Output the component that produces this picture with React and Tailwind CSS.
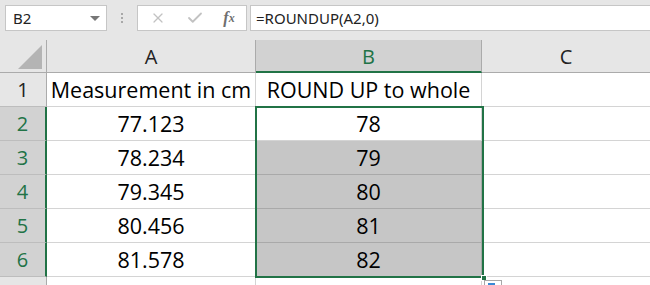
import React from 'react';
import { X, Check } from 'lucide-react';

const rows = [
  { n: 1, a: 'Measurement in cm', b: 'ROUND UP to whole' },
  { n: 2, a: '77.123', b: '78' },
  { n: 3, a: '78.234', b: '79' },
  { n: 4, a: '79.345', b: '80' },
  { n: 5, a: '80.456', b: '81' },
  { n: 6, a: '81.578', b: '82' },
];

const cellFont = { fontFamily: '"Open Sans", "Noto Sans", sans-serif' };

export default function App() {
  return (
    <div className="w-[650px] h-[285px] overflow-hidden bg-white relative" style={cellFont}>
      {/* formula bar */}
      <div className="h-[40px] bg-[#e6e6e6] flex items-start pt-[5px]">
        <div className="ml-[5px] w-[102px] h-[26px] bg-white border border-[#c6c6c6] flex items-center justify-between pl-[7px] pr-[6px]">
          <span className="text-[15px] text-[#222]" style={{ fontFamily: '"Noto Sans", sans-serif' }}>B2</span>
          <span className="w-0 h-0 border-l-[5px] border-r-[5px] border-t-[5px] border-l-transparent border-r-transparent border-t-[#777]" />
        </div>
        <div className="w-[30px] h-[26px] flex flex-col items-center justify-center gap-[2px]">
          <span className="w-[2px] h-[2px] bg-[#a8a8a8]" />
          <span className="w-[2px] h-[2px] bg-[#a8a8a8]" />
          <span className="w-[2px] h-[2px] bg-[#a8a8a8]" />
        </div>
        <div className="w-[110px] h-[26px] bg-white border border-[#c6c6c6] flex items-center">
          <div className="w-[40px] flex justify-center"><X className="w-[16px] h-[16px] text-[#c2c2c2]" strokeWidth={1.8} /></div>
          <div className="w-[34px] flex justify-center"><Check className="w-[18px] h-[18px] text-[#c2c2c2]" strokeWidth={2.4} /></div>
          <div className="w-[34px] flex justify-center text-[#6f6f6f] italic" style={{ fontFamily: '"Liberation Serif", serif' }}>
            <span className="text-[16px] font-semibold">f</span><span className="text-[12px] font-semibold mt-[3px]">x</span>
          </div>
        </div>
        <div className="ml-[3px] flex-1 h-[26px] bg-white border border-[#c6c6c6] border-r-0 flex items-center pl-[5px]">
          <span className="text-[15px] text-[#222]" style={{ fontFamily: '"Noto Sans", sans-serif' }}>=ROUNDUP(A2,0)</span>
        </div>
      </div>

      {/* sheet */}
      <div className="grid grid-cols-[47px_209px_226px_1fr] grid-rows-[33px_repeat(7,34px)]">
        <div className="bg-[#e6e6e6] border-r border-b border-[#ababab] flex items-end justify-end pr-[3px] pb-[2px]">
          <svg width="25" height="25" className="block"><polygon points="24,0 24,24 0,24" fill="#b4b4b4" /></svg>
        </div>
        <div className="bg-[#e6e6e6] border-r border-b border-[#ababab] flex items-center justify-center pt-[2px] text-[20px] text-[#222]">A</div>
        <div className="bg-[#d2d2d2] border-r border-[#ababab] border-b-2 border-b-[#217346] flex items-center justify-center pt-[3px] text-[20px] text-[#217346]">B</div>
        <div className="bg-[#e6e6e6] border-b border-[#ababab] flex items-center justify-center pt-[2px] text-[20px] text-[#222]">C</div>

        {rows.map((r) => {
          const sel = r.n >= 2;
          return (
            <React.Fragment key={r.n}>
              <div className={`${sel ? 'bg-[#d2d2d2] text-[#217346] border-r-2 border-r-[#217346]' : 'bg-[#e6e6e6] text-[#222] border-r border-r-[#ababab]'} border-b border-b-[#bdbdbd] flex items-center justify-center pt-[1px] text-[20px]`}>
                {r.n}
              </div>
              <div className="border-r border-b border-[#d4d4d4] flex items-center justify-center pt-[1px] text-[21.5px] text-black whitespace-nowrap">{r.a}</div>
              <div className={`${r.n >= 3 ? 'bg-[#c6c6c6] border-[#a9a9a9]' : 'border-[#d4d4d4]'} border-r border-b flex items-center justify-center pt-[1px] text-[21.5px] text-black whitespace-nowrap`}>{r.b}</div>
              <div className="border-b border-[#d4d4d4]" />
            </React.Fragment>
          );
        })}
        <div className="bg-[#e6e6e6] border-r border-[#ababab]" />
        <div className="border-r border-[#d4d4d4]" />
        <div className="border-r border-[#d4d4d4]" />
        <div />
      </div>

      {/* selection B2:B6 */}
      <div className="absolute left-[255px] top-[106px] w-[229px] h-[172px] border-2 border-[#217346] pointer-events-none" />
      <div className="absolute left-[481px] top-[275px] w-[6px] h-[6px] bg-[#217346] border border-white" />
      <div className="absolute left-[484px] top-[280px] w-[18px] h-[10px] border border-[#a8a8a8] bg-white">
        <div className="ml-[3px] mt-[2px] w-[7px] h-[5px] bg-[#3a8ad6]" />
      </div>
    </div>
  );
}
